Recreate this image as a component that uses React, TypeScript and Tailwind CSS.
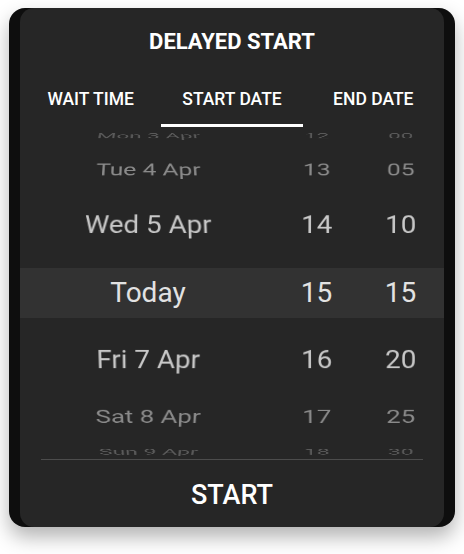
import {useState} from 'react';

const tabs = ['WAIT TIME', 'START DATE', 'END DATE'];

// wheel rows, top to bottom; tilt mimics the drum of each picker column
const rows = [
    {date: 'Mon 3 Apr', hour: '12', min: '00', h: 'h-[44px]', tilt: '[transform:translateY(2px)_rotateX(71deg)_scale(0.8)]', color: 'text-[#5a5a5a]'},
    {date: 'Tue 4 Apr', hour: '13', min: '05', h: 'h-[26px]', tilt: '[transform:translateY(-3px)_rotateX(47deg)_scale(0.88)]', color: 'text-[#8a8a8a]'},
    {date: 'Wed 5 Apr', hour: '14', min: '10', h: 'h-[86px]', tilt: '[transform:rotateX(26deg)_scale(0.99)]', color: 'text-[#c8c8c8]'},
    {date: 'Today', hour: '15', min: '15', h: 'h-[50px]', tilt: '', color: 'text-[#e2e2e2]'},
    {date: 'Fri 7 Apr', hour: '16', min: '20', h: 'h-[84px]', tilt: '[transform:rotateX(-23deg)_scale(0.99)]', color: 'text-[#c8c8c8]'},
    {date: 'Sat 8 Apr', hour: '17', min: '25', h: 'h-[28px]', tilt: '[transform:translateY(-2px)_rotateX(-45deg)_scale(0.92)]', color: 'text-[#8a8a8a]'},
    {date: 'Sun 9 Apr', hour: '18', min: '30', h: 'h-[42px]', tilt: '[transform:translateY(1px)_rotateX(-69deg)_scale(0.82)]', color: 'text-[#5a5a5a]'},
];

function Cell({text, tilt}: {text: string; tilt: string}) {
    return (
        <div className="flex justify-center [perspective:700px]">
            <span className={`block ${tilt}`}>{text}</span>
        </div>
    );
}

export default function App() {
    const [tab, setTab] = useState(1);

    return (
        <div className="w-[464px] h-[554px] bg-white pt-[8px] px-[9px] font-['Roboto',_'Liberation_Sans',_sans-serif]">
            <div className="h-[519px] bg-[#0e0e0e] rounded-[16px] px-[11px] shadow-[0_10px_20px_rgba(0,0,0,0.3)]">
                <div className="h-full bg-[#262626] rounded-[14px] flex flex-col overflow-hidden">

                    {/* title */}
                    <div className="h-[66px] flex items-center justify-center">
                        <h1 className="text-[22px] font-bold text-white">DELAYED START</h1>
                    </div>

                    {/* tabs */}
                    <div className="grid grid-cols-3">
                        {tabs.map((t, i) => (
                            <button key={t} type="button" onClick={() => setTab(i)} className="flex flex-col">
                                <span className="h-[50px] flex items-center justify-center text-[17.5px] font-medium text-white">{t}</span>
                                <span className={`h-[3px] w-full ${tab === i ? 'bg-white' : 'bg-transparent'}`}></span>
                            </button>
                        ))}
                    </div>

                    {/* wheel picker */}
                    <div className="h-[332px] overflow-hidden">
                        <div className="-mt-[15px] flex flex-col">
                            {rows.map((r) => (
                                <div key={r.date}
                                     className={`${r.h} grid grid-cols-[256px_81px_1fr] items-center text-[28px] leading-[34px] ${r.color} ${r.tilt === '' ? 'bg-[#323232]' : ''}`}>
                                    <Cell text={r.date} tilt={r.tilt}/>
                                    <Cell text={r.hour} tilt={r.tilt}/>
                                    <Cell text={r.min} tilt={r.tilt}/>
                                </div>
                            ))}
                        </div>
                    </div>

                    <div className="mx-[21px] h-px bg-[#4c4c4c]"></div>

                    {/* start button */}
                    <button type="button" className="flex-1 flex items-center justify-center pt-[4px] text-[27px] font-medium text-white">
                        START
                    </button>
                </div>
            </div>
        </div>
    );
}
